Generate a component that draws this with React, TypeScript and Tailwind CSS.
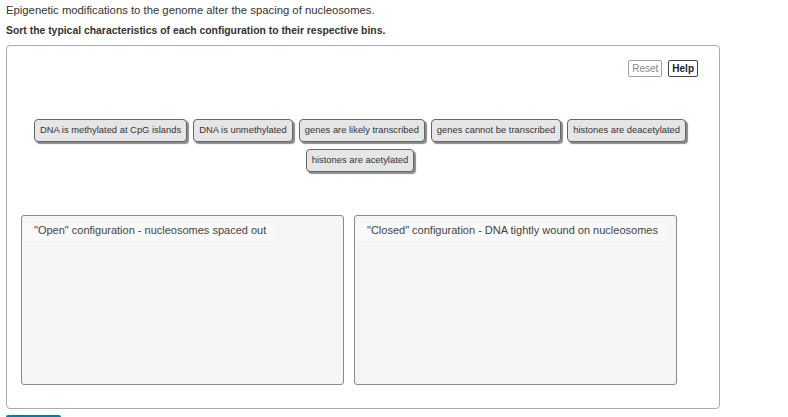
const chipsRow1 = [
  'DNA is methylated at CpG islands',
  'DNA is unmethylated',
  'genes are likely transcribed',
  'genes cannot be transcribed',
  'histones are deacetylated',
]
const chipsRow2 = ['histones are acetylated']

function Chip({ label }: { label: string }) {
  return (
    <div className="h-[23px] px-[5px] flex items-center rounded-[4px] border border-[#666] bg-[#e6e6e6] text-[9.4px] text-[#333] shadow-[2px_2px_1px_#8a8a8a] whitespace-nowrap">
      {label}
    </div>
  )
}

function Bin({ title }: { title: string }) {
  return (
    <div className="w-[323px] h-[170px] rounded-[3px] border border-[#8a8a95] bg-[#f5f5f5] p-[1px]">
      <div className="inline-block bg-[#f9f9f9] pl-[11px] pr-[10px] pt-0 pb-[4px] text-[11px] leading-[14px] text-[#444]">
        {title}
      </div>
    </div>
  )
}

export default function App() {
  return (
    <div className="w-[788px] h-[417px] overflow-hidden bg-white font-['Liberation_Sans',Arial,sans-serif]">
      <div className="pl-[6px] pt-[4px]">
        <p className="text-[11.3px] leading-[13px] text-[#333]">
          Epigenetic modifications to the genome alter the spacing of nucleosomes.
        </p>
        <p className="mt-[7px] text-[10.4px] leading-[13px] font-bold text-[#333]">
          Sort the typical characteristics of each configuration to their respective bins.
        </p>
      </div>

      <div className="ml-[6px] mt-[8px] w-[714px] h-[364px] rounded-[4px] border border-[#ababab] flex flex-col">
        <div className="flex justify-end gap-[6px] pr-[21px] pt-[14px]">
          <button className="h-[17px] px-[3px] rounded-[2px] border border-[#a0a0a0] text-[10px] text-[#888] leading-none">
            Reset
          </button>
          <button className="h-[17px] px-[3px] rounded-[2px] border border-[#444] text-[10px] font-bold text-[#222] leading-none">
            Help
          </button>
        </div>

        <div className="mt-[42px] pr-[6px] flex flex-col items-center gap-[7px]">
          <div className="flex gap-[6px]">
            {chipsRow1.map((c) => (
              <Chip key={c} label={c} />
            ))}
          </div>
          <div className="flex gap-[6px]">
            {chipsRow2.map((c) => (
              <Chip key={c} label={c} />
            ))}
          </div>
        </div>

        <div className="mt-[43px] pl-[14px] flex gap-[10px]">
          <Bin title={'"Open" configuration - nucleosomes spaced out'} />
          <Bin title={'"Closed" configuration - DNA tightly wound on nucleosomes'} />
        </div>
      </div>

      <div className="ml-[6px] mt-[6px] w-[55px] h-[3px] bg-[#0a7aa8] rounded-t-[2px]" />
    </div>
  )
}
